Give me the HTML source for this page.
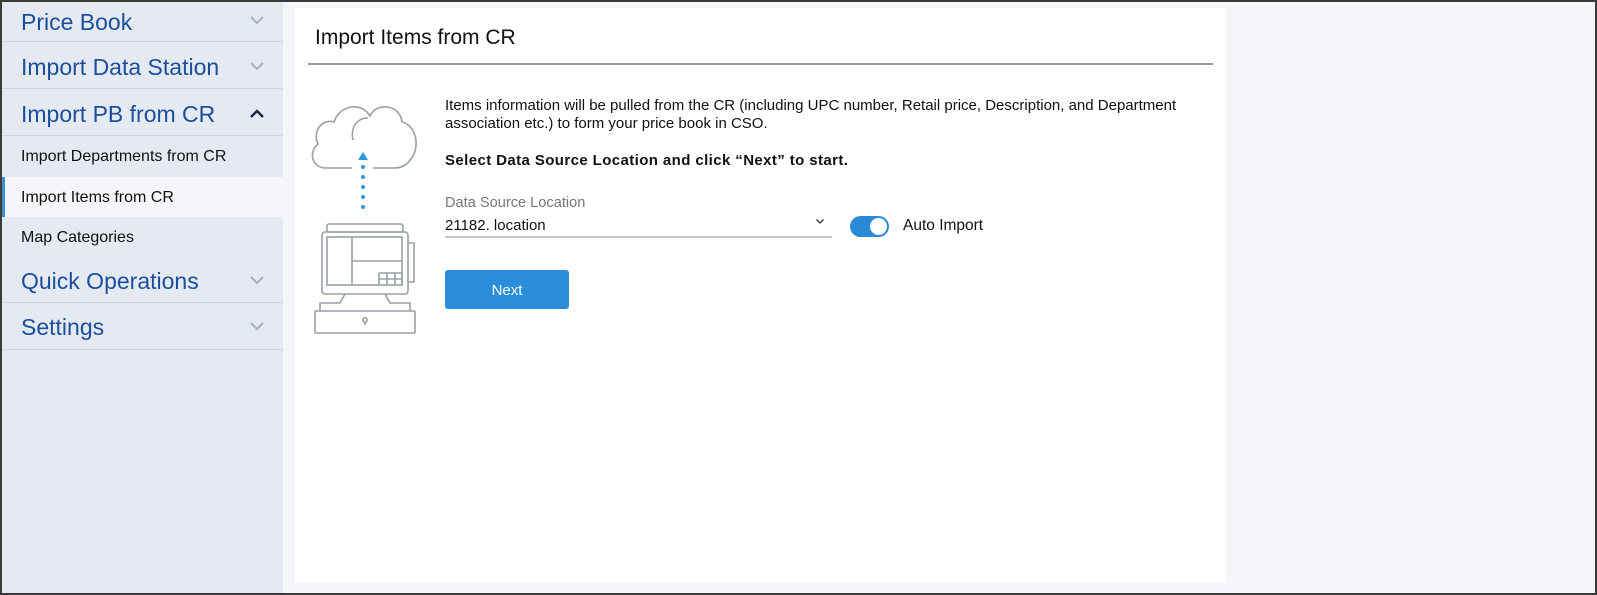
<!DOCTYPE html>
<html><head><meta charset="utf-8"><style>
*{margin:0;padding:0;box-sizing:border-box}
body{width:1597px;height:595px;overflow:hidden;background:#f5f6f9;font-family:"Liberation Sans",sans-serif;position:relative}
.frame{position:absolute;left:0;top:0;width:1597px;height:595px;border:2px solid #3a3a3a;pointer-events:none;z-index:5}
.side{position:absolute;left:0;top:0;width:283px;height:595px;background:#e4e9f2}
.h{position:absolute;left:0;width:283px;border-bottom:1.5px solid #cfd5e0;color:#1b4f9b;font-size:23px;padding-left:21px}
.h svg{position:absolute;right:19px}
.s{position:absolute;left:0;width:283px;font-size:16px;color:#111;padding-left:21px}
.abs{position:absolute}
.panel{position:absolute;left:295px;top:8px;width:931px;height:575px;background:#fff}
</style></head><body>
<div class="side">
 <div class="h" style="top:0;height:42px;line-height:44px">Price Book<svg style="top:16px" width="14" height="9" viewBox="0 0 14 9"><path d="M1 1l6 6 6-6" fill="none" stroke="#a6afbd" stroke-width="2"/></svg></div>
 <div class="h" style="top:42px;height:47px;line-height:50px">Import Data Station<svg style="top:20px" width="14" height="9" viewBox="0 0 14 9"><path d="M1 1l6 6 6-6" fill="none" stroke="#a6afbd" stroke-width="2"/></svg></div>
 <div class="h" style="top:89px;height:47px;line-height:50px">Import PB from CR<svg style="top:20px" width="14" height="9" viewBox="0 0 14 9"><path d="M1 8l6-6 6 6" fill="none" stroke="#1a2a44" stroke-width="2.5"/></svg></div>
 <div class="s" style="top:136px;height:41px;line-height:42px">Import Departments from CR</div>
 <div class="s" style="top:177px;height:40px;line-height:42px;background:#f5f6f9">Import Items from CR</div>
 <div class="abs" style="left:1px;top:177px;width:4px;height:40px;background:#3a8fd1"></div>
 <div class="s" style="top:217px;height:40px;line-height:42px">Map Categories</div>
 <div class="h" style="top:257px;height:46px;line-height:48px">Quick Operations<svg style="top:19px" width="14" height="9" viewBox="0 0 14 9"><path d="M1 1l6 6 6-6" fill="none" stroke="#a6afbd" stroke-width="2"/></svg></div>
 <div class="h" style="top:303px;height:47px;line-height:49px">Settings<svg style="top:19px" width="14" height="9" viewBox="0 0 14 9"><path d="M1 1l6 6 6-6" fill="none" stroke="#a6afbd" stroke-width="2"/></svg></div>
</div>
<div class="panel"></div>
<div class="abs" style="left:315px;top:26px;font-size:21px;color:#111">Import Items from CR</div>
<div class="abs" style="left:308px;top:63px;width:905px;height:2px;background:#999"></div>
<svg class="abs" style="left:300px;top:90px" width="130" height="250" viewBox="300 90 130 250" fill="none" stroke="#9aa0a8" stroke-width="1.6">
 <path d="M352 168 H326 C312 168 308 152 318 144 C312 132 322 118 334 122 C340 104 362 102 370 116 C376 102 400 104 402 122 C418 126 420 150 410 160 C406 166 400 168 394 168 H373"/>
 <path d="M353 140 C350 126 358 118 368 118"/>
 <path d="M363 152 l5 8 h-10z" fill="#2b9be0" stroke="none"/>
 <g fill="#2b9be0" stroke="none"><circle cx="363" cy="167" r="2"/><circle cx="363" cy="177" r="2"/><circle cx="363" cy="187" r="2"/><circle cx="363" cy="197" r="2"/><circle cx="363" cy="207" r="2"/></g>
 <rect x="327" y="224" width="76" height="8" rx="2"/>
 <rect x="322" y="232" width="86" height="62" rx="3"/>
 <rect x="327" y="237" width="75" height="48"/>
 <path d="M352 237 V285 M352 261 H402 M379 273 H402 V285 M379 273 V285 M387 273 V285 M395 273 V285 M379 279 H402"/>
 <path d="M408 243 H414 V282 H408"/>
 <path d="M345 294 L340 303 H320 V311 M385 294 L390 303 H410 V311"/>
 <rect x="315" y="311" width="100" height="22" rx="1"/>
 <circle cx="365" cy="320" r="2.2"/><path d="M365 322 V325"/>
</svg>
<div class="abs" style="left:445px;top:97px;font-size:15px;line-height:18px;color:#111;width:770px">Items information will be pulled from the CR (including UPC number, Retail price, Description, and Department association etc.) to form your price book in CSO.</div>
<div class="abs" style="left:445px;top:152px;font-size:15px;letter-spacing:0.4px;font-weight:bold;color:#111">Select Data Source Location and click “Next” to start.</div>
<div class="abs" style="left:445px;top:195px;font-size:14.6px;color:#777">Data Source Location</div>
<div class="abs" style="left:445px;top:217px;font-size:15px;color:#111">21182. location</div>
<svg class="abs" style="left:815px;top:218px" width="10" height="7" viewBox="0 0 10 7"><path d="M1.5 1.5l3.5 3.5 3.5-3.5" fill="none" stroke="#333" stroke-width="1.3"/></svg>
<div class="abs" style="left:445px;top:236px;width:387px;height:1.5px;background:#c8c8c8"></div>
<div class="abs" style="left:850px;top:216px;width:39px;height:21px;border-radius:11px;background:#2a8ad8"></div>
<div class="abs" style="left:870px;top:218px;width:17px;height:17px;border-radius:50%;background:#fff"></div>
<div class="abs" style="left:903px;top:217px;font-size:15.5px;color:#111">Auto Import</div>
<div class="abs" style="left:445px;top:270px;width:124px;height:39px;border-radius:3px;background:#2a8ddb;color:#fff;font-size:15px;text-align:center;line-height:41px">Next</div>
<div class="frame"></div>
</body></html>
